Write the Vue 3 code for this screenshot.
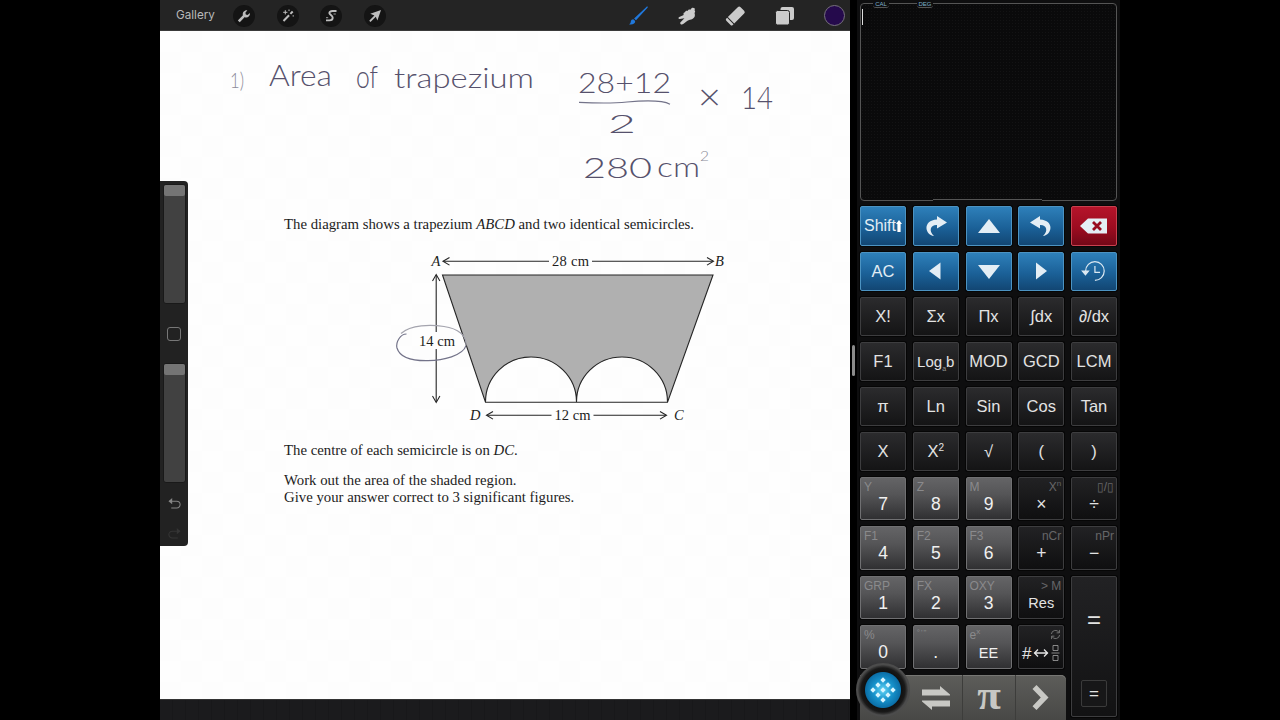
<template>
  <div class="screen">
    <!-- drawing app -->
    <div class="paint">
      <header class="toolbar">
        <span class="gallery">Gallery</span>
        <div class="tools-left">
          <span class="round-tool">
            <svg viewBox="0 0 22 22"><path d="M5.8 16.4 11.8 10.2" stroke-width="2.6" /><path class="solid" d="M10 10.500c-1-2.900 1.300-5.500 4.400-5.200l-2 2.500.4 1.700 1.700.4 2.500-2c.3 3.200-2.300 5.200-5.200 4.400z" /></svg>
          </span>
          <span class="round-tool">
            <svg viewBox="0 0 22 22"><path d="m6.500 16 5.600-5.700M13.400 8.900l2.300-2.400" stroke-width="2" /><path d="M8.300 5.200v4.200M6.200 7.300h4.200M12 4.500v1.600M16.200 10.200v1.400" stroke-width="1" /></svg>
          </span>
          <span class="round-tool">
            <svg viewBox="0 0 22 22"><path d="M16.500 6h-4c-2.200 0-3.300 1-3.100 2.300.3 1.600 3.300 2.300 3.300 4.500 0 1.700-1.300 2.600-3.300 2.600H6" stroke-width="1.900" /><path d="M13.500 9h2.300M6 12.700h2.200" stroke-width=".8" /></svg>
          </span>
          <span class="round-tool">
            <svg viewBox="0 0 22 22"><path class="solid" d="M17 5 13.400 15.500 11.800 11.800 6.500 17 5.200 15.700 10.400 10.400 6.300 8.700z" /></svg>
          </span>
        </div>
        <div class="tools-right">
          <svg class="brush" viewBox="0 0 24 24"><path d="M21.500 2.600c.5.300.3.800 0 1.200L10 16.200l-1.900-1.700L20.400 2.900c.3-.3.700-.5 1.100-.3z" /><path d="M7.300 15.200 9.200 17c.2 2.500-2.500 4-6.200 3.300 1.500-.7 1.500-1.600 1.800-2.900.3-1.500 1.300-2.200 2.500-2.200z" /></svg>
          <svg class="smudge" viewBox="0 0 24 24"><path d="M18.500 4c1.500-.2 1.700 1.200 1 2.200 1 .9.700 2 0 2.700 1.300 3.800-.8 6.100-4.600 6.800-2.800.6-5 3.200-6.700 4.400-1.500 1-3.600-.1-2.900-1.700l4.100-4.100-4.600.8c-1.500.2-1.800-1.600-.5-2.100l4.400-2.100c-.7-1.300.2-2.600 1.300-2.600.1-1.500 1.600-2 2.600-1.400.7-1.300 1.900-1.700 2.900-1.100.7-1.700 2.400-2.300 3-1.800z" /></svg>
          <svg class="eraser" viewBox="0 0 24 24"><g transform="rotate(-45 12 12)"><path d="M1.800 8.500q0-1.500 1.500-1.500h1.200v9H3.300q-1.500 0-1.500-1.500zM5.500 7h14q2 0 2 2v5q0 2-2 2h-14z" /></g></svg>
          <svg class="layers" viewBox="0 0 24 24"><rect x="7.500" y="3" width="13.500" height="13" rx="2" /><rect class="front" x="2.500" y="6.500" width="14" height="14.500" rx="2" /></svg>
          <span class="colour"></span>
        </div>
      </header>

      <main class="canvas">
        <!-- brush size and opacity -->
        <aside class="sidebar">
          <div class="slider"><i></i></div>
          <span class="modify"></span>
          <div class="slider"><i></i></div>
          <svg class="history-step" viewBox="0 0 16 14"><path d="M2.500 4.500h7.800c5 0 5 7.300 0 7.300H4.500" /><path class="tip" d="M5.500 1.200v6.600L1.500 4.500z" /></svg>
          <svg class="history-step dim" viewBox="0 0 16 14"><path d="M13.500 4.500H5.700c-5 0-5 7.300 0 7.300h5.800" /><path class="tip" d="M10.500 1.200v6.600l4-3.300z" /></svg>
        </aside>

        <article class="question">
          <p>The diagram shows a trapezium <em>ABCD</em> and two identical semicircles.</p>
          <svg class="diagram" viewBox="380 240 370 190">
            <path class="shade" d="M442.500 275H713L667.500 402a45.500 45 0 0 0-91 0 45.500 45 0 0 0-91 0z" />
            <path class="line" d="M442.500 275H713L667.500 402.200H485.500zM485.500 402a45.500 45 0 0 1 91 0 45.500 45 0 0 1 91 0" />
            <path class="line" d="M443.500 261.300H549M592 261.300h121M436.200 275v57M436.200 349v53M487 415.300h64.500M593.500 415.300H666" />
            <path class="line" d="m449.500 257.500-6.500 3.800 6.500 3.800M707 257.500l6.500 3.800-6.500 3.800M432.500 281l3.700-6.500 3.700 6.500M432.500 396l3.700 6.500 3.700-6.500M493 411.500l-6.500 3.800 6.500 3.800M660 411.500l6.500 3.800-6.500 3.800" />
            <text class="name" x="431.500" y="266">A</text>
            <text class="name" x="715" y="266">B</text>
            <text class="name" x="470" y="420">D</text>
            <text class="name" x="674" y="420">C</text>
            <text x="552" y="266" textLength="37">28 cm</text>
            <text x="419" y="345.500" textLength="36">14 cm</text>
            <text x="554.500" y="420" textLength="36">12 cm</text>
          </svg>
          <p>The centre of each semicircle is on <em>DC</em>.</p>
          <p class="task">Work out the area of the shaded region.<br />Give your answer correct to 3 significant figures.</p>
        </article>

        <!-- pen layer above the question -->
        <svg class="ink" viewBox="160 30 690 669">
          <text
            v-for="note in notes"
            :key="note.x"
            :class="note.tone"
            :x="note.x"
            :y="note.y"
            :font-size="note.size"
            :textLength="note.width"
            lengthAdjust="spacingAndGlyphs"
          >{{ note.text }}</text>
          <path d="M579 102.300c20 1 35 1 48-.3 17-1.500 34-2.500 43 2.200" />
          <path d="M406.500 334c-6 0-11 8-9.500 14 3 10 17 13 31 12.700 15-.3 35-5 38-15" />
          <path class="faint" d="M401 333.500c10-9 30-9 43-7 14 2 23 9 22 19" />
        </svg>
      </main>
      <footer class="strip"></footer>
    </div>

    <div class="divider"><i></i></div>

    <!-- calculator -->
    <div class="calc">
      <div class="display">
        <span class="flag">CAL</span>
        <span class="flag deg">DEG</span>
        <i class="cursor"></i>
        <i class="notch"></i>
      </div>

      <div class="keys">
        <button v-for="key in keys" :key="key.id" class="key" :class="[key.kind, key.size]">
          <span v-if="key.alt" class="alt">{{ key.alt }}<sup v-if="key.sup">{{ key.sup }}</sup></span>
          <svg v-if="key.cycle" class="cycle" viewBox="0 0 12 12"><path d="M1.500 5.500A4.500 4.500 0 0 1 10 4M10.500 6.500A4.500 4.500 0 0 1 2 8M10.300 1v3.200H7.200M1.700 11V7.800h3.100" /></svg>

          <span v-if="key.id === 'log'">Log<sub>a</sub>b</span>
          <span v-else-if="key.id === 'square'">X<sup>2</sup></span>
          <span v-else-if="key.id === 'shift'" class="shift">Shift<svg viewBox="0 0 6 12"><path d="M3 0 6 4H4.600v8H1.400V4H0z" /></svg></span>
          <span v-else-if="key.id === 'fraction'" class="fraction">#<svg viewBox="0 0 27 18"><path d="M1 9h14M5 5.500 1.500 9 5 12.500M11 5.500l3.500 3.500-3.500 3.500" /><path class="thin" d="M18.500 9h8M20 1.500h5v5h-5zM20 11.500h5v5h-5z" /></svg></span>
          <svg v-else-if="key.icon" class="icon" :class="`icon-${key.id}`" viewBox="0 0 28 24">
            <path :d="key.icon" />
            <path v-if="key.extra" class="extra" :d="key.extra" />
          </svg>
          <span v-else>{{ key.label }}</span>
        </button>

        <button class="key equals"><span>=</span><span class="mini">=</span></button>

        <nav class="tabs">
          <span class="tab home">
            <span class="orb">
              <svg viewBox="0 0 26 26"><path v-for="d in dots" :key="d" :d="`M${d}m0-2.700 2.700 2.700-2.700 2.700-2.700-2.700z`" /></svg>
            </span>
          </span>
          <span class="tab"><svg viewBox="0 0 30 26"><path d="M1 4.500h18V1l10 8.500v1H1zM29 21.500H11v3.500L1 16.500v-1h28z" /></svg></span>
          <span class="tab pi">π</span>
          <span class="tab"><svg viewBox="0 0 30 26"><path d="m6.500 4 4-4 12 12.500-12 12.500-4-3.700 8.300-8.800z" /></svg></span>
        </nav>
      </div>
    </div>
  </div>
</template>

<script setup>
// handwritten working
const notes = [
  { text: '1)', x: 230, y: 88, size: 21, width: 14, tone: 'faint' },
  { text: 'Area', x: 269, y: 85.5, size: 29, width: 63 },
  { text: 'of', x: 356, y: 88, size: 32, width: 22 },
  { text: 'trapezium', x: 394, y: 88, size: 28, width: 140 },
  { text: '28+12', x: 578, y: 93, size: 27, width: 93 },
  { text: '2', x: 608, y: 133, size: 26, width: 28 },
  { text: '×', x: 698, y: 110, size: 37, width: 23 },
  { text: '14', x: 741, y: 109, size: 32, width: 32 },
  { text: '280', x: 583, y: 178, size: 28, width: 69 },
  { text: 'cm', x: 657, y: 177, size: 27, width: 43 },
  { text: '2', x: 700, y: 161, size: 14, width: 9, tone: 'faint' }
]

const keys = [
  { id: 'shift', kind: 'blue' },
  { id: 'redo', kind: 'blue', icon: 'M15 2 25 8.500 15 14.500v-3.500c-6-.5-9 5.500-3 11C3 21 0 6.500 15 5.500z' },
  { id: 'up', kind: 'blue', icon: 'M14 5 25 19H3z' },
  { id: 'undo', kind: 'blue', icon: 'M13 2 3 8.500 13 14.500v-3.500c6-.5 9 5.500 3 11C25 21 28 6.500 13 5.500z' },
  { id: 'delete', kind: 'red', icon: 'M0 12 8 4.500h19v15H8z', extra: 'm13 8 8 8M21 8l-8 8' },
  { id: 'ac', kind: 'blue', label: 'AC' },
  { id: 'left', kind: 'blue', icon: 'M18.500 3.500v17L7 12z' },
  { id: 'down', kind: 'blue', icon: 'M3 6h22L14 20z' },
  { id: 'right', kind: 'blue', icon: 'M9 3.500v17L20 12z' },
  { id: 'history', kind: 'blue', icon: 'M5 12A10 10 0 1 1 15 22M15 6.500v7h5.500', extra: 'M1.500 12h6.500l-3.200 4z' },
  { id: 'fact', label: 'X!' },
  { id: 'sum', label: 'Σx' },
  { id: 'prod', label: 'Πx' },
  { id: 'int', label: '∫dx' },
  { id: 'diff', label: '∂/dx' },
  { id: 'f1', label: 'F1' },
  { id: 'log', size: 'small' },
  { id: 'mod', label: 'MOD' },
  { id: 'gcd', label: 'GCD' },
  { id: 'lcm', label: 'LCM' },
  { id: 'pi', label: 'π' },
  { id: 'ln', label: 'Ln' },
  { id: 'sin', label: 'Sin' },
  { id: 'cos', label: 'Cos' },
  { id: 'tan', label: 'Tan' },
  { id: 'x', label: 'X' },
  { id: 'square' },
  { id: 'root', label: '√' },
  { id: 'open', label: '(' },
  { id: 'close', label: ')' },
  { id: '7', kind: 'num', label: '7', alt: 'Y' },
  { id: '8', kind: 'num', label: '8', alt: 'Z' },
  { id: '9', kind: 'num', label: '9', alt: 'M' },
  { id: 'times', kind: 'op', label: '×', alt: 'X', sup: 'n' },
  { id: 'divide', kind: 'op', label: '÷', alt: '▯/▯' },
  { id: '4', kind: 'num', label: '4', alt: 'F1' },
  { id: '5', kind: 'num', label: '5', alt: 'F2' },
  { id: '6', kind: 'num', label: '6', alt: 'F3' },
  { id: 'plus', kind: 'op', label: '+', alt: 'nCr' },
  { id: 'minus', kind: 'op', label: '−', alt: 'nPr' },
  { id: '1', kind: 'num', label: '1', alt: 'GRP' },
  { id: '2', kind: 'num', label: '2', alt: 'FX' },
  { id: '3', kind: 'num', label: '3', alt: 'OXY' },
  { id: 'res', kind: 'op', size: 'small', label: 'Res', alt: '> M' },
  { id: '0', kind: 'num', label: '0', alt: '%' },
  { id: 'dot', kind: 'num', label: '.', alt: '°\'"', size: 'tiny-alt' },
  { id: 'ee', kind: 'num', size: 'small', label: 'EE', alt: 'e', sup: 'x' },
  { id: 'fraction', kind: 'op', cycle: true }
]

// diamond lattice on the home button
const dots = ['13 3', '8 8', '18 8', '3 13', '13 13', '23 13', '8 18', '18 18', '13 23']
</script>

<style>
body {
  margin: 0;
  background: #000;
}
</style>

<style scoped>
.screen {
  display: flex;
  width: 1280px;
  height: 720px;
  padding-left: 160px;
  box-sizing: border-box;
  overflow: hidden;
  background: #000;
  font-family: 'Liberation Sans', Arial, sans-serif;
}

.paint {
  display: flex;
  flex-direction: column;
  width: 690px;
}

.toolbar {
  display: flex;
  align-items: center;
  height: 31px;
  flex: none;
  padding: 1px 5px 0 16px;
  background: #242424;
  border-bottom: 1px solid #3a3a3a;
  box-sizing: border-box;
  color: #b9b9b9;
}

.gallery {
  width: 57px;
  font-family: Inter, sans-serif;
  font-size: 11.700px;
  line-height: 29px;
}

.tools-left {
  display: flex;
  gap: 21.500px;
}

.round-tool {
  width: 22px;
  height: 22px;
  border-radius: 50%;
  background: #141414;
}

.round-tool svg {
  display: block;
  fill: none;
  stroke: #bdbdbd;
}

.round-tool .solid {
  fill: #bdbdbd;
  stroke: none;
}

.tools-right {
  display: flex;
  align-items: center;
  margin-left: auto;
  gap: 25px;
}

.tools-right svg {
  width: 24px;
  height: 24px;
  fill: #cbcbcb;
}

.tools-right .brush {
  fill: #2078dc;
}

.tools-right .front {
  stroke: #242424;
  stroke-width: 1;
}

.colour {
  width: 21px;
  height: 21px;
  margin-left: 2px;
  border: 1px solid #77717d;
  border-radius: 50%;
  background: #250a4c;
  box-sizing: border-box;
}

.canvas {
  position: relative;
  display: flex;
  flex: 1;
  background: repeating-conic-gradient(#fdfdfd 0 25%, #fefefe 0 50%) 0 0 / 42px 42px;
}

.sidebar {
  display: flex;
  flex-direction: column;
  align-items: center;
  width: 28px;
  height: 365px;
  margin-top: 150px;
  padding-top: 3px;
  border-radius: 0 4px 4px 0;
  background: #222;
  box-sizing: border-box;
}

.slider {
  width: 21px;
  height: 118px;
  border: 1px solid #191919;
  border-radius: 3px;
  background: #414141;
}

.slider i {
  display: block;
  height: 11px;
  border-radius: 2px;
  background: #747474;
}

.modify {
  width: 14px;
  height: 14px;
  margin: 23px 0 22px;
  border: 1px solid #777;
  border-radius: 3px;
  box-sizing: border-box;
}

.history-step {
  width: 15px;
  height: 13px;
  margin-top: 14px;
  fill: none;
  stroke: #858585;
  stroke-width: 1.1;
}

.history-step .tip {
  fill: #858585;
  stroke: none;
}

.dim {
  margin-top: 17px;
  stroke: #353535;
}

.dim .tip {
  fill: #353535;
}

.question {
  margin: 185px 0 0 96px;
  width: 500px;
  color: #1c1c1c;
  font-family: 'Liberation Serif', 'Times New Roman', serif;
  font-size: 14.780px;
}

.question p {
  margin: 0;
  line-height: 17px;
}

.question .task {
  margin-top: 13px;
}

.diagram {
  display: block;
  width: 370px;
  height: 190px;
  margin: 7px 0 12px 96px;
  fill: #1c1c1c;
  font-size: 14.500px;
}

.name {
  font-style: italic;
}

.shade {
  fill: #b0b0b0;
}

.line {
  fill: none;
  stroke: #252525;
  stroke-width: 1.1;
}

.ink {
  position: absolute;
  top: -1px;
  left: 0;
  width: 690px;
  height: 669px;
  fill: none;
  stroke: #737389;
  stroke-width: 1.2;
}

.ink text {
  fill: #56516c;
  stroke: none;
  font-family: Lato, 'Open Sans', sans-serif;
  font-weight: 300;
}

.ink .faint {
  stroke: #a4a4ae;
}

.ink text.faint {
  fill: #8b8b99;
  stroke: none;
}

.strip {
  height: 21px;
  background: repeating-linear-gradient(90deg, #1b1b1d 0 12px, #18181a 12px 13px);
  border-top: 1px solid #333;
  box-sizing: border-box;
}

.divider {
  display: flex;
  align-items: center;
  width: 7px;
  background: #000;
}

.divider i {
  width: 3px;
  height: 31px;
  margin-left: 2px;
  border-radius: 2px;
  background: #8b8b8b;
}

.calc {
  width: 263px;
  padding: 3px 3px 0;
  box-sizing: border-box;
  background: #0e0e0f;
}

.display {
  position: relative;
  height: 198px;
  border: 1px solid #555;
  border-radius: 4px;
  box-sizing: border-box;
  background-color: #0a0a0b;
  background-image: radial-gradient(circle, #131314 0.7px, transparent 1px);
  background-size: 3px 3px;
}

.flag {
  position: absolute;
  top: -3px;
  left: 12px;
  width: 16px;
  height: 6px;
  border-bottom: 1px solid #555;
  border-radius: 0 0 3px 3px;
  background: #0e0e0f;
  color: #7fb2ce;
  font-size: 6px;
  line-height: 6px;
  text-align: center;
}

.deg {
  left: 56px;
}

.cursor {
  position: absolute;
  top: 5px;
  left: 1px;
  width: 1px;
  height: 16px;
  background: #ddd;
}

.notch {
  position: absolute;
  bottom: -1px;
  left: 72px;
  width: 109px;
  height: 2px;
  background: #0e0e0f;
  border-top: 1px solid #555;
  box-sizing: border-box;
}

.keys {
  display: grid;
  grid-template-columns: repeat(5, 46px);
  grid-template-rows: 39.500px 39.500px 39px 39px 39px 38.500px 43.500px 43.500px 43.500px 44px 45px;
  gap: 6px 6.750px;
  margin-top: 5px;
}

.key {
  position: relative;
  display: flex;
  align-items: center;
  justify-content: center;
  padding: 0;
  border: 1px solid #3d3d3f;
  border-radius: 2px;
  background: linear-gradient(#2b2b2d, #141415);
  box-shadow: 0 0 0 1px #060606;
  color: #e3e3e3;
  font-family: 'Liberation Sans', Arial, sans-serif;
  font-size: 16.500px;
  line-height: 1;
  white-space: nowrap;
}

.key svg {
  flex: none;
}

.key sup {
  font-size: 10px;
  line-height: 0;
}

.key sub {
  font-size: 7px;
  line-height: 0;
  color: #999;
}

.small {
  font-size: 15px;
}

.blue {
  border-color: #4c93c2;
  background: linear-gradient(#2e80ba, #1b6198 55%, #124673);
  color: #e2edf4;
}

.red {
  border-color: #c9404f;
  background: linear-gradient(#b5142a, #9c0c20 55%, #730817);
}

.num {
  border-color: #707072;
  background: linear-gradient(#646466, #555557 40%, #303032);
  color: #f0f0f0;
}

.num,
.op {
  padding-top: 12px;
  font-size: 17.500px;
}

.op {
  background: linear-gradient(#222224, #0f0f10);
}

.num.small,
.op.small {
  font-size: 14.500px;
}

.alt {
  position: absolute;
  top: 3px;
  left: 3px;
  color: #8a8a8c;
  font-size: 12px;
}

.key .alt sup {
  font-size: 8px;
}

.op .alt {
  right: 2px;
  left: auto;
  color: #666668;
}

.tiny-alt .alt {
  font-size: 8px;
  letter-spacing: 1px;
}

.cycle {
  position: absolute;
  top: 3px;
  right: 2px;
  width: 11px;
  height: 11px;
  fill: none;
  stroke: #777;
}

.icon {
  width: 28px;
  height: 24px;
  fill: #e4eef5;
}

.icon-delete .extra {
  fill: none;
  stroke: #980b20;
  stroke-width: 2.800;
}

.icon-history {
  width: 26px;
  fill: none;
  stroke: #dce9f2;
  stroke-width: 1.3;
}

.icon-history .extra {
  fill: #dce9f2;
}

.shift {
  display: flex;
  align-items: center;
  font-size: 16px;
}

.shift svg {
  width: 6px;
  height: 12px;
  fill: #fff;
}

.fraction {
  display: flex;
  align-items: center;
  font-size: 17px;
}

.fraction svg {
  width: 27px;
  height: 18px;
  margin-left: 2px;
  fill: none;
  stroke: #e3e3e3;
  stroke-width: 1.300;
}

.fraction .thin {
  stroke: #a5a5a5;
  stroke-width: 0.8;
}

.equals {
  grid-column: 5;
  grid-row: 9 / 12;
  flex-direction: column;
  justify-content: flex-end;
  margin-bottom: 3px;
  padding-bottom: 9px;
  background: linear-gradient(#222224, #121213);
  font-size: 24px;
}

.mini {
  width: 26px;
  height: 27px;
  margin-top: 48px;
  border: 1px solid #3b3b3b;
  border-radius: 2px;
  box-sizing: border-box;
  background: #171718;
  font-size: 17px;
  line-height: 25px;
  text-align: center;
}

.tabs {
  display: grid;
  grid-template-columns: 50px 53px 53px 50px;
  grid-column: 1 / 5;
  grid-row: 11;
  width: 206px;
  border-radius: 0 5px 0 0;
  background: linear-gradient(#5d5d5a, #484846);
  box-shadow: inset 0 1px #777774;
}

.tab {
  display: flex;
  align-items: center;
  justify-content: center;
  border-right: 1px solid #3d3d3b;
}

.tab:last-child {
  border-right: 0;
}

.tab svg {
  width: 30px;
  height: 26px;
  fill: #c8c8c4;
}

.pi {
  padding-bottom: 5px;
  color: #c8c8c4;
  font-family: 'Liberation Serif', serif;
  font-size: 43px;
  font-weight: bold;
  line-height: 38px;
}

.home {
  position: relative;
  border-right: 0;
}

.orb {
  position: absolute;
  top: -12px;
  left: -4px;
  display: flex;
  align-items: center;
  justify-content: center;
  width: 54px;
  height: 54px;
  border: 2px solid #4c4c4c;
  border-radius: 50%;
  box-sizing: border-box;
  background: radial-gradient(circle, #62d4f5 0, #1793cc 10px, #0b6fa8 17.500px, #111 18.500px, #191919 22px, #444 25px);
}

.orb svg {
  width: 26px;
  height: 26px;
  fill: #d8f5ff;
}
</style>
